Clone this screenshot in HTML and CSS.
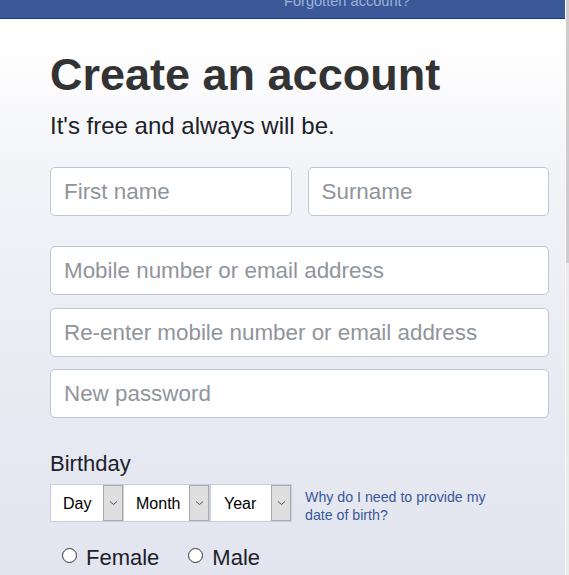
FILE: index.html
```html
<!DOCTYPE html>
<html lang="en">
<head>
<meta charset="utf-8">
<title>Create an account</title>
<link rel="stylesheet" href="styles.css">
</head>
<body>
<div class="page">
  <header class="topbar">
    <a class="forgot" href="#">Forgotten account?</a>
  </header>
  <main class="signup">
    <h1 class="title">Create an account</h1>
    <p class="subtitle">It's free and always will be.</p>
    <form class="form">
      <div class="name-row">
        <input class="field" type="text" placeholder="First name">
        <input class="field" type="text" placeholder="Surname">
      </div>
      <div class="stack">
        <input class="field" type="text" placeholder="Mobile number or email address">
        <input class="field" type="text" placeholder="Re-enter mobile number or email address">
        <input class="field" type="password" placeholder="New password">
      </div>
      <div class="birthday">
        <div class="label">Birthday</div>
        <div class="bday-row">
          <div class="selects">
            <div class="sel sel-day"><select><option>Day</option></select><span class="arrow"><svg width="9" height="6" viewBox="0 0 9 6"><path d="M1 1.5 L4.5 4.5 L8 1.5" fill="none" stroke="#555" stroke-width="1"/></svg></span></div>
            <div class="sel sel-month"><select><option>Month</option></select><span class="arrow"><svg width="9" height="6" viewBox="0 0 9 6"><path d="M1 1.5 L4.5 4.5 L8 1.5" fill="none" stroke="#555" stroke-width="1"/></svg></span></div>
            <div class="sel sel-year"><select><option>Year</option></select><span class="arrow"><svg width="9" height="6" viewBox="0 0 9 6"><path d="M1 1.5 L4.5 4.5 L8 1.5" fill="none" stroke="#555" stroke-width="1"/></svg></span></div>
          </div>
          <a class="why" href="#">Why do I need to provide my date of birth?</a>
        </div>
      </div>
      <div class="gender">
        <label class="radio"><input type="radio" name="sex"><span>Female</span></label>
        <label class="radio"><input type="radio" name="sex"><span>Male</span></label>
      </div>
    </form>
  </main>
</div>
<div class="scrollbar"></div>
</body>
</html>
```
FILE: styles.css
```css
html, body {
  margin: 0;
  padding: 0;
  height: 575px;
  overflow: hidden;
}
body {
  display: flex;
  font-family: "Liberation Sans", Arial, sans-serif;
  background: #fff;
}
.page {
  width: 566px;
  height: 575px;
  display: flex;
  flex-direction: column;
  background: linear-gradient(#ffffff 0px, #ffffff 40px, #f3f4f8 170px, #e9ebf3 380px, #e2e5ef 575px);
}
.scrollbar {
  width: 3px;
  height: 575px;
  border-left: 1px solid #fafafa;
  background: linear-gradient(#cdcdcd 0, #cdcdcd 263px, #ececec 263px);
}
.topbar {
  height: 18px;
  background: #3b5998;
  border-bottom: 1px solid #133783;
  position: relative;
  overflow: hidden;
}
.forgot {
  position: absolute;
  left: 284px;
  top: -7px;
  font-size: 14.6px;
  line-height: 17px;
  color: #9cb4d8;
  text-decoration: none;
}
.signup {
  padding: 30px 16px 0 50px;
}
.title {
  margin: 0;
  font-size: 45px;
  line-height: 52px;
  font-weight: bold;
  color: #333;
}
.subtitle {
  margin: 11px 0 0;
  font-size: 24px;
  line-height: 28px;
  color: #1d2129;
}
.form {
  margin-top: 27px;
  display: flex;
  flex-direction: column;
}
.name-row {
  display: grid;
  grid-template-columns: 1fr 1fr;
  gap: 16px;
}
.stack {
  margin-top: 30px;
  display: flex;
  flex-direction: column;
  gap: 12.5px;
}
.field {
  box-sizing: border-box;
  height: 49px;
  width: 100%;
  border: 1px solid #bdc7d8;
  border-radius: 5px;
  background: #fff;
  padding: 1px 13px 0;
  font-family: "Liberation Sans", Arial, sans-serif;
  font-size: 22.4px;
  color: #1d2129;
  outline: none;
}
.field::placeholder {
  color: #90949c;
}
.birthday {
  margin-top: 33px;
}
.label {
  font-size: 22px;
  line-height: 26px;
  color: #1d2129;
}
.bday-row {
  margin-top: 7px;
  display: flex;
  align-items: flex-start;
}
.selects {
  display: flex;
  gap: 1px;
  background: #c8cee0;
  border: 1px solid #c8cee0;
}
.sel {
  display: flex;
  height: 36px;
  background: #fff;
}
.sel select {
  appearance: none;
  -webkit-appearance: none;
  border: none;
  background: #fff;
  font-family: "Liberation Sans", Arial, sans-serif;
  font-size: 16px;
  color: #000;
  padding: 0 0 0 12px;
  height: 36px;
  outline: none;
}
.sel-day select { width: 52px; }
.sel-month select { width: 65px; }
.sel-year select { width: 60px; padding-left: 13px; }
.sel-year { margin-left: 1px; }
.arrow {
  box-sizing: border-box;
  width: 20px;
  height: 36px;
  background: #dfdfdf;
  border: 1px solid #a9a9a9;
  display: flex;
  align-items: center;
  justify-content: center;
}
.why {
  margin-left: 13px;
  margin-top: 4px;
  width: 190px;
  font-size: 14.2px;
  line-height: 18px;
  color: #385898;
  text-decoration: none;
}
.gender {
  margin-top: 21px;
  margin-left: 12px;
  display: flex;
  gap: 29px;
}
.radio {
  display: flex;
  align-items: flex-start;
  font-size: 22px;
  line-height: 26px;
  color: #1d2129;
}
.radio input {
  appearance: none;
  -webkit-appearance: none;
  box-sizing: border-box;
  width: 15px;
  height: 15px;
  margin: 3px 9px 0 0;
  border: 1px solid #333;
  border-radius: 50%;
  background: #fff;
}
```
